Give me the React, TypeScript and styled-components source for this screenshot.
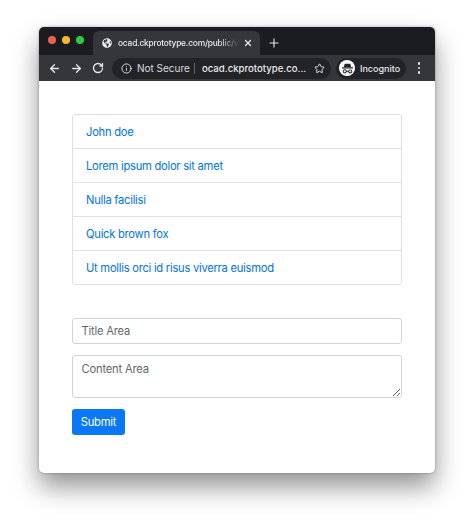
import { createGlobalStyle } from "styled-components";
import styled from "styled-components";
import { LuArrowLeft, LuArrowRight, LuRotateCw, LuInfo, LuStar, LuX, LuPlus } from "react-icons/lu";
import { FaGlobeAmericas } from "react-icons/fa";

const GlobalStyle = createGlobalStyle`
  html, body {
    margin: 0;
    padding: 0;
    background: #fff;
    font-family: Inter, "Liberation Sans", sans-serif;
  }
  * { box-sizing: border-box; }
`;

const Stage = styled.div`
  width: 474px;
  height: 524px;
  padding: 27px 39px 0;
  overflow: hidden;
`;

const Window = styled.div`
  width: 396px;
  height: 446px;
  border-radius: 5px;
  overflow: hidden;
  background: #fff;
  box-shadow: 0 14px 26px rgba(0, 0, 0, 0.42), 0 0 3px rgba(0, 0, 0, 0.3);
  display: flex;
  flex-direction: column;
`;

const TabStrip = styled.div`
  height: 28px;
  background: #1b1c1f;
  display: flex;
  align-items: flex-end;
  padding-left: 9px;
`;

const Lights = styled.div`
  display: flex;
  gap: 6px;
  align-self: center;
  margin-top: -2px;
`;

const Light = styled.span<{ $color: string }>`
  width: 8px;
  height: 8px;
  border-radius: 50%;
  background: ${(p) => p.$color};
`;

const Tab = styled.div`
  width: 167px;
  height: 24px;
  margin-left: 9px;
  padding: 0 7px 0 9px;
  background: #35363a;
  border-radius: 6px 6px 0 0;
  color: #e8eaed;
  display: flex;
  align-items: center;
  font-size: 8.4px;
  letter-spacing: -0.2px;
  font-weight: 500;
  svg {
    flex-shrink: 0;
  }
`;

const TabTitle = styled.span`
  flex: 1;
  margin-left: 6px;
  white-space: nowrap;
  -webkit-mask-image: linear-gradient(90deg, #000 80%, transparent 98%);
  mask-image: linear-gradient(90deg, #000 80%, transparent 98%);
`;

const NewTab = styled.div`
  margin-left: 7px;
  align-self: center;
  margin-top: 4px;
  display: flex;
  color: #dfe1e5;
`;

const Toolbar = styled.div`
  height: 26px;
  background: #35363a;
  display: flex;
  align-items: center;
  padding-left: 9px;
  color: #e8eaed;
`;

const NavButtons = styled.div`
  display: flex;
  gap: 9px;
  align-items: center;
`;

const Omnibox = styled.div`
  width: 219px;
  height: 21px;
  margin-left: 8px;
  padding: 0 6px 0 9px;
  border-radius: 11px;
  background: #222326;
  display: flex;
  align-items: center;
  font-size: 10px;
  white-space: nowrap;
`;

const NotSecure = styled.span`
  margin-left: 5px;
  padding-right: 4px;
  border-right: 1px solid #5f6368;
  line-height: 11px;
  color: #dadce0;
`;

const Url = styled.span`
  margin-left: 7px;
  flex: 1;
  font-weight: 500;
  font-size: 9.6px;
`;

const IncognitoPill = styled.div`
  width: 70px;
  height: 21px;
  margin-left: 5px;
  padding-left: 3px;
  border-radius: 11px;
  background: #222326;
  display: flex;
  align-items: center;
  gap: 5px;
  font-size: 9px;
  font-weight: 500;
`;

const IncognitoBadge = styled.span`
  width: 16px;
  height: 16px;
  border-radius: 50%;
  background: #fff;
  display: flex;
  align-items: center;
  justify-content: center;
`;

const Dots = styled.div`
  margin-left: 12px;
  display: flex;
  flex-direction: column;
  gap: 2px;
  span {
    width: 2.4px;
    height: 2.4px;
    border-radius: 50%;
    background: #e8eaed;
  }
`;

const Content = styled.div`
  flex: 1;
  padding: 33px;
`;

const List = styled.ul`
  list-style: none;
  margin: 0 0 33px;
  padding: 0;
  border: 1px solid #e0e0e0;
  border-radius: 3px;
`;

const Item = styled.li`
  height: 34px;
  padding-left: 13px;
  display: flex;
  align-items: center;
  font-size: 11.2px;
  letter-spacing: -0.26px;
  color: #0073e6;
  & + & {
    border-top: 1px solid #e0e0e0;
  }
  &:first-child {
    height: 33px;
  }
`;

const Field = styled.input`
  display: block;
  width: 100%;
  height: 26px;
  margin-bottom: 11px;
  padding: 0 8.5px;
  border: 1px solid #ced4da;
  border-radius: 3px;
  font: 11.2px Inter, "Liberation Sans", sans-serif;
  letter-spacing: -0.2px;
  &::placeholder { color: #5f666d; opacity: 1; }
`;

const Area = styled.textarea`
  display: block;
  width: 100%;
  height: 43px;
  margin-bottom: 11px;
  padding: 4px 8.5px;
  border: 1px solid #ced4da;
  border-radius: 3px;
  font: 11.2px/18px Inter, "Liberation Sans", sans-serif;
  letter-spacing: -0.2px;
  &::placeholder { color: #5f666d; opacity: 1; }
`;

const Submit = styled.button`
  display: block;
  width: 53px;
  height: 26px;
  padding: 0;
  border: 0;
  border-radius: 3px;
  background: #0a78f5;
  color: #fff;
  font: 11.2px Inter, "Liberation Sans", sans-serif;
  letter-spacing: -0.2px;
`;

const SpyIcon = () => (
  <svg width="13" height="13" viewBox="0 0 16 16" fill="#222326">
    <path d="M4.6 2.2h6.8l1.2 4H3.4z" />
    <rect x="1" y="6.6" width="14" height="1.3" rx="0.6" />
    <path
      fillRule="evenodd"
      d="M4.6 9a2.5 2.5 0 0 1 2.4 1.8h2A2.5 2.5 0 1 1 8.9 12H7.1a2.5 2.5 0 1 1-2.5-3zm0 1.2a1.3 1.3 0 1 0 0 2.6 1.3 1.3 0 0 0 0-2.6zm6.8 0a1.3 1.3 0 1 0 0 2.6 1.3 1.3 0 0 0 0-2.6z"
    />
  </svg>
);

const items = [
  "John doe",
  "Lorem ipsum dolor sit amet",
  "Nulla facilisi",
  "Quick brown fox",
  "Ut mollis orci id risus viverra euismod",
];

export default function App() {
  return (
    <Stage>
      <GlobalStyle />
      <Window>
        <TabStrip>
          <Lights>
            <Light $color="#ed5f57" />
            <Light $color="#f5b82e" />
            <Light $color="#2bc840" />
          </Lights>
          <Tab>
            <FaGlobeAmericas size={10} />
            <TabTitle>ocad.ckprototype.com/public/v</TabTitle>
            <LuX size={10} strokeWidth={3} />
          </Tab>
          <NewTab>
            <LuPlus size={14} strokeWidth={2} />
          </NewTab>
        </TabStrip>
        <Toolbar>
          <NavButtons>
            <LuArrowLeft size={13} strokeWidth={2.4} />
            <LuArrowRight size={13} strokeWidth={2.4} />
            <LuRotateCw size={12} strokeWidth={2.6} />
          </NavButtons>
          <Omnibox>
            <LuInfo size={11} />
            <NotSecure>Not Secure</NotSecure>
            <Url>ocad.ckprototype.co...</Url>
            <LuStar size={11} />
          </Omnibox>
          <IncognitoPill>
            <IncognitoBadge>
              <SpyIcon />
            </IncognitoBadge>
            Incognito
          </IncognitoPill>
          <Dots>
            <span />
            <span />
            <span />
          </Dots>
        </Toolbar>
        <Content>
          <List>
            {items.map((item) => (
              <Item key={item}>{item}</Item>
            ))}
          </List>
          <Field placeholder="Title Area" />
          <Area placeholder="Content Area" />
          <Submit>Submit</Submit>
        </Content>
      </Window>
    </Stage>
  );
}
